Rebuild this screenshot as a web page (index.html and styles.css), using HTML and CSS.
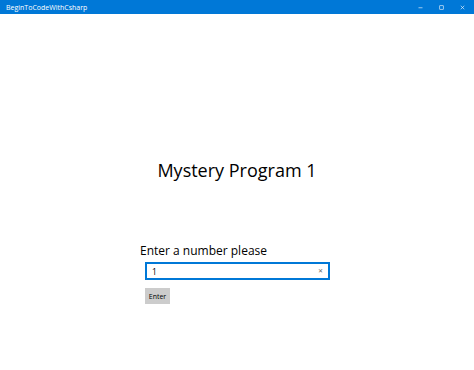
FILE: index.html
```html
<!DOCTYPE html>
<html lang="en">
<head>
    <meta charset="UTF-8">
    <title>BeginToCodeWithCsharp</title>
    <link rel="stylesheet" href="styles.css">
</head>
<body>
    <div class="titlebar">
        <span class="appname">BeginToCodeWithCsharp</span>
        <div class="winbtns">
            <span class="wbtn">
                <svg viewBox="0 0 10 10"><path d="M1 5.5h8" stroke="#fff" stroke-width="1.2"/></svg>
            </span>
            <span class="wbtn">
                <svg viewBox="0 0 10 10"><rect x="1.5" y="1.5" width="7" height="7" fill="none" stroke="#fff" stroke-width="1.2"/></svg>
            </span>
            <span class="wbtn">
                <svg viewBox="0 0 10 10"><path d="M1.5 1.5l7 7M8.5 1.5l-7 7" stroke="#fff" stroke-width="1.2"/></svg>
            </span>
        </div>
    </div>
    <div class="page">
        <h1 class="heading">Mystery Program 1</h1>
        <div class="form">
            <div class="prompt">Enter a number please</div>
            <div class="inputbox">
                <span class="value">1</span>
                <span class="clear">&#x2715;</span>
            </div>
            <button class="btn">Enter</button>
        </div>
    </div>
</body>
</html>
```

FILE: styles.css
```css
body {
    margin: 0;
    background: #fff;
    font-family: "Open Sans", "Noto Sans", sans-serif;
    color: #000;
}
.titlebar {
    height: 14px;
    background: #0078d7;
    display: flex;
    align-items: center;
    justify-content: space-between;
    color: #fff;
}
.appname {
    font-size: 7px;
    padding-left: 6px;
}
.winbtns {
    display: flex;
    padding-right: 1px;
}
.wbtn {
    width: 21px;
    height: 14px;
    display: flex;
    align-items: center;
    justify-content: center;
}
.wbtn svg {
    width: 5px;
    height: 5px;
}
.page {
    height: 356px;
}
.heading {
    margin: 0;
    padding-top: 144px;
    text-align: center;
    font-weight: normal;
    font-size: 18px;
    line-height: 24px;
}
.form {
    padding-top: 61px;
    padding-left: 140px;
}
.prompt {
    font-size: 12px;
    line-height: 16px;
}
.inputbox {
    margin: 3px 0 0 5px;
    width: 171px;
    height: 14px;
    border: 2px solid #0078d7;
    display: flex;
    align-items: center;
    justify-content: space-between;
    padding: 0 5px;
    box-sizing: content-box;
}
.value {
    font-size: 8.5px;
}
.clear {
    font-size: 6px;
    color: #666;
}
.btn {
    display: block;
    margin: 8px 0 0 5px;
    width: 25px;
    height: 16px;
    padding: 0;
    border: none;
    background: #cccccc;
    font-family: "Open Sans", "Noto Sans", sans-serif;
    font-size: 7px;
    color: #000;
}
```
